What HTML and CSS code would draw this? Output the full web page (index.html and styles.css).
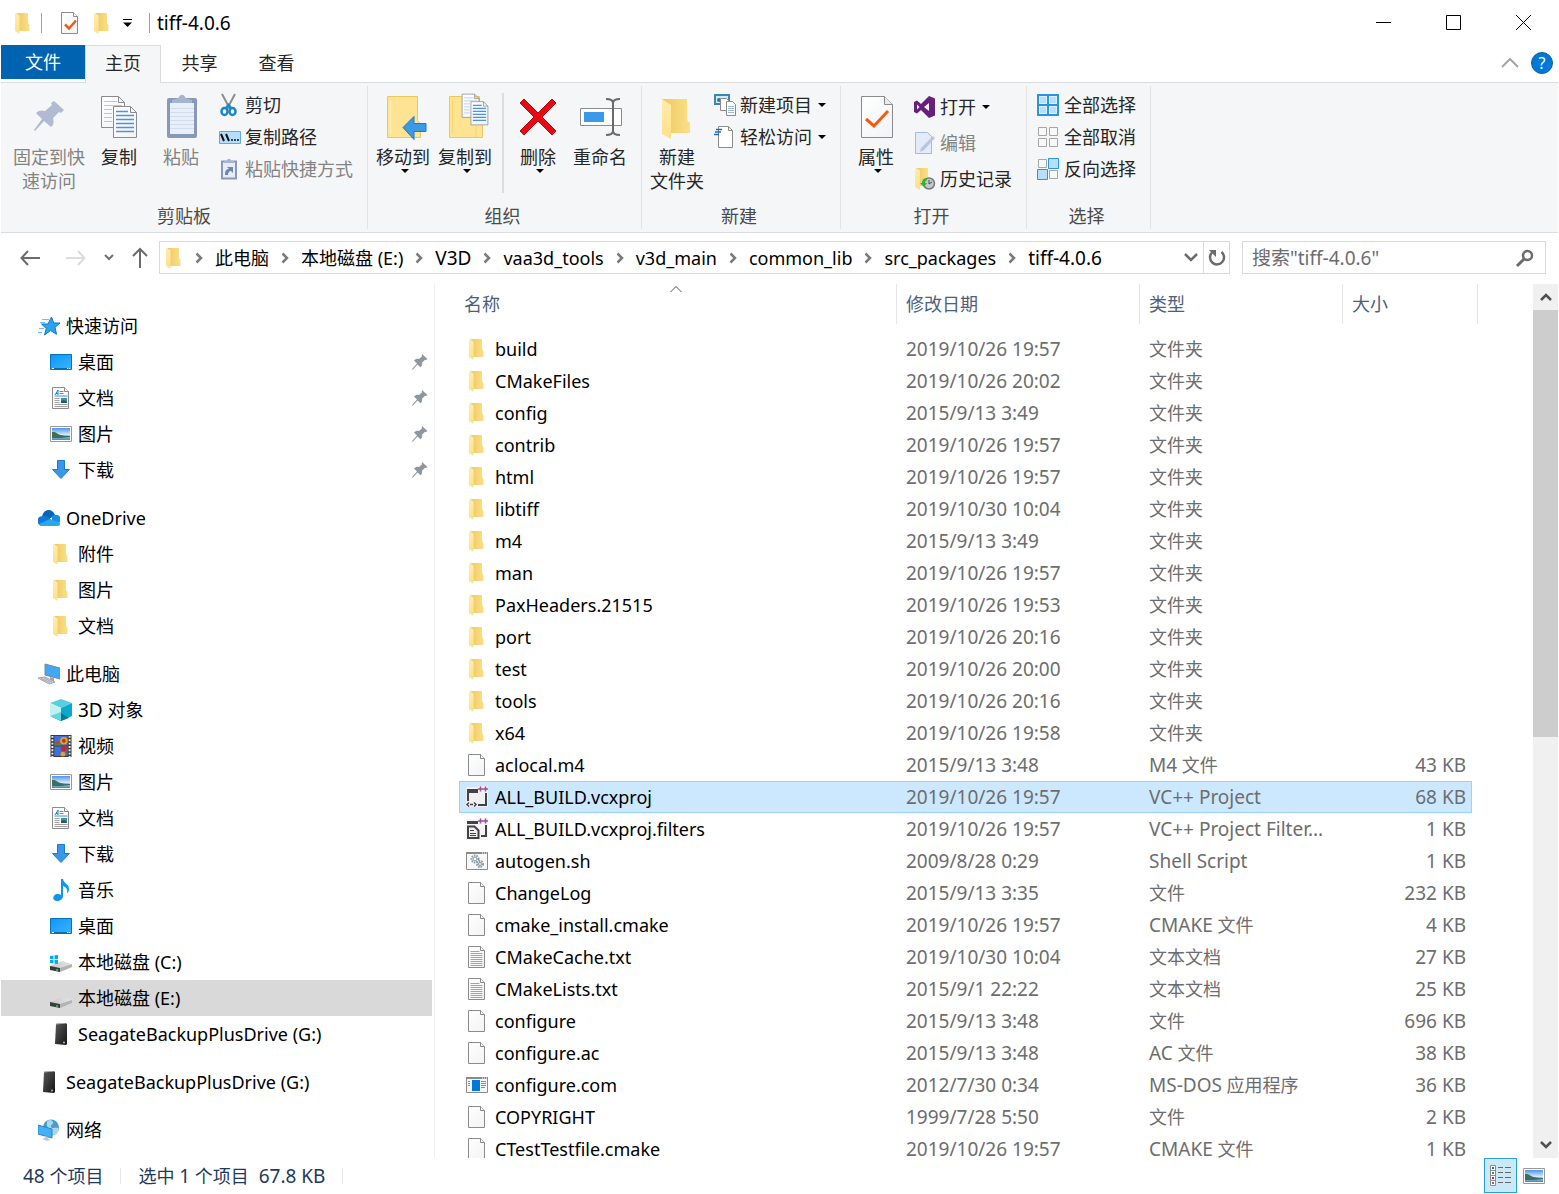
FILE: index.html
```html
<!DOCTYPE html>
<html lang="zh-CN">
<head>
<meta charset="utf-8">
<title>tiff-4.0.6</title>
<link rel="stylesheet" href="styles.css">
</head>
<body>
<svg class="sprite" aria-hidden="true">
  <defs>
    <linearGradient id="g-folder" x1="0" x2="1"><stop offset="0" stop-color="#edc863"/><stop offset="1" stop-color="#fcdf87"/></linearGradient>
    <linearGradient id="g-flap" x1="0" x2="0" y1="0" y2="1"><stop offset="0" stop-color="#ffecac"/><stop offset="1" stop-color="#ffe08a"/></linearGradient>
    <linearGradient id="g-desk" x1="0" x2="1" y1="0" y2="1"><stop offset="0" stop-color="#0c97fb"/><stop offset="1" stop-color="#3db3ff"/></linearGradient>
    <linearGradient id="g-sky" x1="0" x2="0" y1="0" y2="1"><stop offset="0" stop-color="#4f93ee"/><stop offset=".55" stop-color="#d3ebfb"/><stop offset="1" stop-color="#3f86c4"/></linearGradient>
    <linearGradient id="g-page" x1="0" x2="1" y1="0" y2="1"><stop offset="0" stop-color="#fff"/><stop offset="1" stop-color="#f1f3f6"/></linearGradient>
    <linearGradient id="g-drive" x1="0" x2="1"><stop offset="0" stop-color="#c9c9cb"/><stop offset="1" stop-color="#e4e4e6"/></linearGradient>
    <linearGradient id="g-dark" x1="0" x2="1" y1="0" y2="1"><stop offset="0" stop-color="#5a5a5a"/><stop offset="1" stop-color="#151515"/></linearGradient>
  </defs>
  <symbol id="folder" viewBox="0 0 22 22"><path d="M4 1h12v10l1.500 2v6H7V4z" fill="url(#g-folder)"/><path d="M3 1l4.500 2.500V22L3 19z" fill="url(#g-flap)"/></symbol>
  <symbol id="file" viewBox="0 0 22 22"><path d="M2.500.5h12l4 4v17h-16z" fill="url(#g-page)" stroke="#8b8b8b"/><path d="M14.500.5v4h4" fill="#fff" stroke="#8b8b8b"/></symbol>
  <symbol id="text" viewBox="0 0 22 22"><use href="#file"/><path d="M4.500 5.500h9M4.500 7.500h12M4.500 9.500h12M4.500 11.500h12M4.500 13.500h12M4.500 15.500h12M4.500 17.500h12M4.500 19.500h12" stroke="#a3a3a3"/></symbol>
  <symbol id="vcx" viewBox="0 0 22 22"><path d="M0 1h12V0h10v21H0z" fill="#f0eff1"/><path d="M1 3h11v4H3v8H1zM19 7h2v13h-9v-2h7z" fill="#424242"/><path d="M12 3h5M14.500.5v5M17 3h5M19.500.5v5" stroke="#9b4f96" stroke-width="1.500"/><path d="M3 16.500l-2 2 2 2M8 16.500l2 2-2 2M4 18.500h3" stroke="#424242" stroke-width="1.500" fill="none"/></symbol>
  <symbol id="filters" viewBox="0 0 22 22"><path d="M0 1h12V0h10v22H0z" fill="#f4f3f5"/><path d="M1 3h11v3H1zM19 7h2v12h-6v-2h4z" fill="#424242"/><path d="M12 3h5M14.500.5v5M17 3h5M19.500.5v5" stroke="#9b4f96" stroke-width="1.500"/><path d="M2 8.500h6.500l4 4V20H2z" fill="#f0eff1" stroke="#424242" stroke-width="2"/><path d="M4 12.500h4M4 15.500h6M4 17.500h6" stroke="#424242"/></symbol>
  <symbol id="script" viewBox="0 0 22 22"><path d="M.5 2.500h21v17H.5z" fill="#f8f8f8" stroke="#8b8b8b"/><path d="M0 3h22" stroke="#8b8b8b" stroke-width="2"/><path d="M16 3h5" stroke="#fff" stroke-dasharray="1 1"/><g fill="none" stroke="#8998a5"><circle cx="9" cy="9" r="3.500" stroke-width="2" stroke-dasharray="1.500 1"/><circle cx="9" cy="9" r="2"/><circle cx="14" cy="14" r="3" stroke-width="2" stroke-dasharray="1.500 1"/><circle cx="14" cy="14" r="1.500"/></g></symbol>
  <symbol id="app" viewBox="0 0 22 22"><path d="M.5 3.500h21v15H.5z" fill="#f5f5f5" stroke="#8b8b8b"/><path d="M0 4h22" stroke="#8b8b8b" stroke-width="2"/><path d="M16 4h5" stroke="#fff" stroke-dasharray="1 1"/><path d="M6 6h8v11H6z" fill="#0078d7"/><path d="M2 7.500h2M2 9.500h2M2 11.500h2M15 7.500h5M15 9.500h5M15 11.500h5M15 13.500h4" stroke="#8b8b8b"/></symbol>
  <symbol id="desktop" viewBox="0 0 22 22"><path d="M.5 3.500h21v15H.5z" fill="url(#g-desk)" stroke="#0773bf"/><path d="M2 17.500h2M17 17.500h1M19 17.500h1" stroke="#fff"/><path d="M4 17.500h13" stroke="#086cb5"/></symbol>
  <symbol id="document" viewBox="0 0 22 22"><use href="#file"/><path d="M5 8l3-5v5M6 6.500h2" stroke="#1e88cf" fill="none"/><path d="M9.500 4.500h4M9.500 6.500h4M4.500 9h13" stroke="#3a99d8"/><path d="M4.500 11.500h5M4.500 13.500h5M4.500 15.500h5M4.500 17.500h13M4.500 19.500h13" stroke="#a3a3a3"/><path d="M11 11h6v5h-6z" fill="#4a87b5"/><path d="M11 14l3-1 3 2v1h-6z" fill="#285d50"/></symbol>
  <symbol id="picture" viewBox="0 0 22 22"><path d="M.5 3.500h21v15H.5z" fill="#fff" stroke="#989898"/><path d="M2 5h18v12H2z" fill="url(#g-sky)"/><path d="M2 9c4-.5 5 2 9 3s6 .5 9 1v1c-6 1-12 1-18 1z" fill="#3f6f55"/></symbol>
  <symbol id="download" viewBox="0 0 22 22"><path d="M7.500 1.500h7v9h5L11 19.500 2.500 10.500h5z" fill="#3797e8" stroke="#1e79c8"/></symbol>
  <symbol id="music" viewBox="0 0 22 22"><path d="M11 0h2c1 5 6 5 6 10 0 2-1 4-2 4 1-4-1-6-4-7v10c0 3-3 5-6 5-5 0-5-6 0-7 2 0 3 0 4 1z" fill="#0d95f2"/></symbol>
  <symbol id="star" viewBox="0 0 22 22"><path d="M13.500 2l2.200 6H22l-5 4.300 1.500 7-6-3.800-6 4.500 1.800-6.500L3.500 9H10z" fill="#29a4f5" stroke="#1274bd"/><path d="M4 4.500h7M2 7.500h5M1 13.500h5M0 17.500h4" stroke="#69bff6"/></symbol>
  <symbol id="cloud" viewBox="0 0 22 22"><path d="M4 10C5 2 14 0 17 8l-7 5z" fill="#0864b8"/><path d="M5 19C-2 19-3 9 5 9c4-1 6 2 9 5z" fill="#0f78d4"/><path d="M14 9c5-3 10 0 9 6l-9 2z" fill="#1490df"/><path d="M1 17l11-5 11 4c0 2-2 3-4 3H5c-2 0-3-1-4-2z" fill="#28a8ea"/></symbol>
  <symbol id="pc" viewBox="0 0 22 22"><path d="M7 1l15 4v11L7 12z" fill="#3fa9f5" stroke="#7c8790"/><path d="M12 14l4 1v3l-4-1z" fill="#9ea4aa"/><path d="M0 15l7-1 10 5-6 2z" fill="#d9dde1" stroke="#9da5ad"/><path d="M3 15.500l9 4M6 15l8 4" stroke="#9da5ad"/></symbol>
  <symbol id="cube" viewBox="0 0 22 22"><path d="M0 4l11-4 11 4-11 5z" fill="#58cfe0"/><path d="M0 4l11 5v13L0 17z" fill="#c5eff0"/><path d="M22 4L11 9v13l11-5z" fill="#0aa9cb"/><path d="M11 14l8 5-8 3-9-4z" fill="#087b93"/><path d="M0 17l11-4v9z" fill="#63d6df"/></symbol>
  <symbol id="video" viewBox="0 0 22 23"><path d="M0 0h22v23H0z" fill="#3a3a3a"/><path d="M2 1v22M20 1v22" stroke="#eee" stroke-width="2" stroke-dasharray="2 1.500"/><path d="M4 1h14v10H4zM4 12h14v10H4z" fill="#3e6fe0"/><circle cx="14" cy="6" r="4" fill="#e5a519"/><circle cx="14" cy="6" r="2" fill="#bb3824"/><circle cx="14" cy="14" r="3" fill="#c2272d"/><path d="M4 10c3-4 5-4 7 1H4z" fill="#38962c"/><circle cx="7" cy="8" r="2" fill="#d5392b"/><circle cx="13" cy="20" r="2.500" fill="#e5a519"/></symbol>
  <symbol id="drive" viewBox="0 0 22 22"><path d="M0 15l12-5 10 3v3l-12 5-10-3z" fill="url(#g-drive)"/><path d="M0 15l10 2v4L0 19z" fill="#3b3d3b"/><path d="M10 17l12-4v3l-12 5z" fill="#b3b3b5"/><path d="M7 18v2" stroke="#3ed04b" stroke-width="1.500"/></symbol>
  <symbol id="windrive" viewBox="0 0 22 22"><use href="#drive"/><path d="M0 5l3.500-.5V8H0zM4.500 4.300L8 4v4H4.500zM0 9h3.500v3.500L0 12zM4.500 9H8v4l-3.500-.3z" fill="#00adef"/></symbol>
  <symbol id="seagate" viewBox="0 0 22 22"><path d="M6 1l10-1 1 1v20l-1 1-11-1z" fill="url(#g-dark)"/><path d="M6 1l10-1 1 1" stroke="#aaa" fill="none"/><circle cx="14" cy="19.500" r="1" fill="#b8b8b8"/></symbol>
  <symbol id="network" viewBox="0 0 22 22"><circle cx="13" cy="8.500" r="8" fill="#4a9dc9"/><path d="M9 2c3-2 5-1 6 1s-3 3-2 5 5 0 7 1-1 7-4 7-8-6-7-14z" fill="#a9d8ea"/><path d="M0 6l14 4v9L0 15z" fill="#43b0f7" stroke="#2c84bd"/><path d="M7 17l3 1v2l3 1-4 1-5-2 3-1z" fill="#c3c8cc"/></symbol>
  <symbol id="pushpin" viewBox="0 0 16 16"><path d="M10 0l5.500 5-1.500 1-1-.2-3 3c.5 2 0 3-1.500 4.500L5.500 10.500 1 15.500l-1 .5.5-1.500L5 9.500 2 6.500C3.500 5 5 4.500 7 5l2.800-2.500z"/></symbol>
  <symbol id="proplist" viewBox="0 0 22 22"><use href="#file"/><path d="M6 12.500l4 4 7-8" stroke="#f4590c" stroke-width="2.500" fill="none"/></symbol>
  <symbol id="chev" viewBox="0 0 8 12"><path d="M1.500 1.500L6 6l-4.500 4.500" fill="none" stroke="#7a7a7a" stroke-width="2.500"/></symbol>
  <symbol id="caret" viewBox="0 0 8 4"><path d="M0 0h8L4 4z"/></symbol>
  <symbol id="copypages" viewBox="0 0 38 44"><g fill="url(#g-page)" stroke="#8b8b8b"><path d="M1.500 1.500h17l6 6v25h-23zM18.500 1.500v6h6"/><path d="M13.500 11.500h17l6 6v25h-23zM30.500 11.500v6h6"/></g><path d="M4 6.500h13M4 10.500h18M4 14.500h8M4 18.500h8M4 22.500h8M4 26.500h8" stroke="#a9c8f5"/><path d="M16 16.500h12M16 20.500h18M16 24.500h18M16 28.500h18M16 32.500h18M16 36.500h18" stroke="#4e90f0" stroke-width="1.500"/></symbol>
</svg>

<header class="titlebar">
  <svg class="ico"><use href="#folder"/></svg>
  <span class="bar"></span>
  <button class="ico-btn" aria-label="属性"><svg class="ico"><use href="#proplist"/></svg></button>
  <button class="ico-btn" aria-label="新建文件夹"><svg class="ico"><use href="#folder"/></svg></button>
  <button class="ico-btn" aria-label="自定义快速访问工具栏"><svg class="qat" viewBox="0 0 10 8"><path d="M0 .5h9" stroke="#000"/><path d="M0 3.500h9L4.500 8z"/></svg></button>
  <span class="bar"></span>
  <h1 class="title latin">tiff-4.0.6</h1>
  <div class="caption">
    <button aria-label="最小化"><svg width="15" height="15" viewBox="0 0 15 15"><path d="M0 7.500h15" stroke="#000"/></svg></button>
    <button aria-label="最大化"><svg width="15" height="15" viewBox="0 0 15 15"><path d="M.5.5h14v14H.5z" stroke="#000" fill="none"/></svg></button>
    <button aria-label="关闭"><svg width="15" height="15" viewBox="0 0 15 15"><path d="M0 0l15 15M15 0L0 15" stroke="#000"/></svg></button>
  </div>
</header>

<nav class="tabs">
  <button class="tab tab-file">文件</button>
  <button class="tab tab-on">主页</button>
  <button class="tab">共享</button>
  <button class="tab">查看</button>
  <div class="tabs-end">
    <button class="ico-btn" aria-label="最小化功能区"><svg width="18" height="10" viewBox="0 0 18 10"><path d="M1 9l8-8 8 8" fill="none" stroke="#a5a5a5" stroke-width="2"/></svg></button>
    <button class="help" aria-label="帮助">?</button>
  </div>
</nav>

<section class="ribbon">
  <div class="group">
    <div class="tools">
      <button class="big w-pin off"><svg width="32" height="48" viewBox="0 0 32 48"><path d="M21 8l10 9-3 3-2-1-6 6c1 4 1 6-2 9l-7-6-9 10-1-1 8-11-6-6c3-3 6-3 9-2l7-6-1-2z" fill="#aebbd0"/></svg>固定到快<br>速访问</button>
      <button class="big w-56"><svg width="38" height="48" viewBox="0 -2 38 48"><use href="#copypages" width="38" height="44"/></svg>复制</button>
      <button class="big w-68 off"><svg width="30" height="48" viewBox="0 0 30 48"><rect x="1" y="5" width="30" height="40" rx="2" fill="#8798bb"/><path d="M4 10h24v31H4z" fill="#e9eff9"/><path d="M4 15.500h24M4 19.500h24M4 23.500h24M4 27.500h24M4 31.500h24M4 35.500h24" stroke="#d3dcea"/><path d="M6 10V7c2-1 6-1 7-3 1-3 5-3 6 0 1 2 5 2 7 3v3z" fill="#a5b4cf"/></svg>粘贴</button>
      <div class="stack">
        <button class="small"><svg class="ico" viewBox="1 0 22 22"><path d="M4 0l8 15M17 0L9 15" stroke="#8d8d8d" stroke-width="2"/><g fill="none" stroke="#1b87c9" stroke-width="2.500"><ellipse cx="6.500" cy="17.500" rx="3" ry="3.500"/><ellipse cx="14.500" cy="17.500" rx="3" ry="3.500"/><path d="M8 14l2.500-3 2.500 3"/></g></svg>剪切</button>
        <button class="small"><svg class="ico" viewBox="0 0 22 22"><path d="M.5 5.500h21v12H.5z" fill="#b4dffc" stroke="#63a9d8"/><path d="M2 8l3 7M7 8l3 7" stroke="#111" stroke-width="2"/><path d="M12 14h2M15 14h2M18 14h2" stroke="#111" stroke-width="1.500"/></svg>复制路径</button>
        <button class="small off"><svg class="ico" viewBox="1 0 22 22"><path d="M4 3.500h14v17H4z" fill="#e6edf8" stroke="#8798bb" stroke-width="2"/><path d="M6 5V3h3c0-3 4-3 4 0h3v2z" fill="#a5b4cf"/><path d="M7 17c0-4 1-6 4-6l-2-2h6v6l-2-2c-2 0-3 2-3 4z" fill="#6f86ae"/></svg>粘贴快捷方式</button>
      </div>
    </div>
    <div class="group-name">剪贴板</div>
  </div>

  <div class="group g-org">
    <div class="tools">
      <button class="big w-62"><svg width="34" height="48" viewBox="0 0 34 48"><path d="M1.500 3.500h30v24l3 3v14h-33z" fill="#fee392" stroke="#edc75c"/><path d="M4.500 7v34" stroke="#fff0b8"/><path d="M17 34.500l11-11v7h12v8H28v8z" fill="#3a9ae8" stroke="#1e79c8"/></svg>移动到<svg class="caret"><use href="#caret"/></svg></button>
      <button class="big w-62"><svg width="34" height="48" viewBox="0 0 34 48"><path d="M1.500 3.500h30v24l3 3v14h-33z" fill="#fee392" stroke="#edc75c"/><path d="M4.500 7v34M28 32v12" stroke="#f8d46d"/><svg x="13" y="0" width="28" height="33" viewBox="0 0 38 44" preserveAspectRatio="none"><use href="#copypages" width="38" height="44"/></svg></svg>复制到<svg class="caret"><use href="#caret"/></svg></button>
      <span class="split"></span>
      <button class="big w-68"><svg width="38" height="48" viewBox="0 -1 38 48"><path d="M1 9l4-4 14 14L33 5l4 4-14 14 14 14-4 4-14-14L5 41l-4-4 14-14z" fill="#e80a12" stroke="#b60a10"/></svg>删除<svg class="caret"><use href="#caret"/></svg></button>
      <button class="big w-56"><svg width="42" height="48" viewBox="0 0 42 48"><path d="M1.500 15.500h41v17h-41z" fill="#fff" stroke="#8b8b8b"/><path d="M5 19h20v10H5z" fill="#3a9ae8"/><path d="M27 6c5 0 7 1 7 4v28c0 3-2 4-7 4M41 6c-5 0-7 1-7 4M41 42c-5 0-7-1-7-4" fill="none" stroke="#6a6a6a" stroke-width="2"/></svg>重命名</button>
    </div>
    <div class="group-name">组织</div>
  </div>

  <div class="group g-flush">
    <div class="tools">
      <button class="big w-70"><svg width="32" height="48" viewBox="1 -1 32 48"><path d="M2 5h25v21l3 3v10H8V12z" fill="url(#g-folder)"/><path d="M2 5l9 6v34l-9-5z" fill="url(#g-flap)"/></svg>新建<br>文件夹</button>
      <div class="stack s-new">
        <button class="small"><svg class="ico" viewBox="0 0 22 22"><path d="M1 1h14v9H1z" fill="#cbeafb" stroke="#3c86ad" stroke-width="2"/><circle cx="5" cy="6" r="2" fill="#3f7a66"/><path d="M6.500 4.500h6l2 2v10h-8z" fill="#fff" stroke="#8b8b8b"/><path d="M12.500 7.500h6l3 3v11h-9z" fill="#fff" stroke="#8b8b8b"/><path d="M14 12.500h6M14 14.500h6M14 16.500h6M14 18.500h6" stroke="#9cb6dd"/></svg>新建项目<svg class="caret"><use href="#caret"/></svg></button>
        <button class="small"><svg class="ico" viewBox="0 0 22 22"><path d="M4.500.5h10l4 4v17h-14z" fill="#fff" stroke="#8b8b8b"/><path d="M14.500.5v4h4" fill="none" stroke="#8b8b8b"/><path d="M2 3.500h6M1 6h6M0 8.500h5" stroke="#1d6fb5" stroke-width="1.500"/></svg>轻松访问<svg class="caret"><use href="#caret"/></svg></button>
      </div>
    </div>
    <div class="group-name">新建</div>
  </div>

  <div class="group g-flush">
    <div class="tools">
      <button class="big w-70"><svg width="32" height="48" viewBox="0 0 32 48"><path d="M1.500 3.500h23l8 8v33h-31z" fill="url(#g-page)" stroke="#8b8b8b"/><path d="M24.500 3.500v8h8" fill="#e8eaec" stroke="#8b8b8b"/><path d="M6 26l8 7 14-15" fill="none" stroke="#f4590c" stroke-width="3"/></svg>属性<svg class="caret"><use href="#caret"/></svg></button>
      <div class="stack s-open">
        <button class="small"><svg class="ico" viewBox="0 0 22 22"><path fill-rule="evenodd" d="M15 0l6 2.500v17L15 22 7 14l-4 3.500L0 16V6l3-1.500L7 8zM3 8.500v5L5.500 11zM15 7l-5 4 5 4z" fill="#68217a"/></svg>打开<svg class="caret"><use href="#caret"/></svg></button>
        <button class="small off"><svg class="ico" viewBox="0 0 22 22"><path d="M1.500.5h12l4 4v17h-16z" fill="#e3ebf8" stroke="#a9bad6"/><path d="M6 20l1-4L19 4l2 2L10 18z" fill="#b7c6de"/></svg>编辑</button>
        <button class="small"><svg class="ico" viewBox="0 0 22 22"><path d="M2 0h12v18H6V3z" fill="url(#g-folder)"/><path d="M1 0l5 3v19l-5-3z" fill="url(#g-flap)"/><circle cx="15" cy="15.500" r="5.500" fill="#c4c8ca" stroke="#747b80" stroke-width="1.500"/><path d="M15 12v4l3-2" stroke="#4b4f52" fill="none"/><path d="M13 10c-4 0-5 3-5 5H6l4 4 3-4h-2c0-2 1-2 2-3z" fill="#35b135"/></svg>历史记录</button>
      </div>
    </div>
    <div class="group-name">打开</div>
  </div>

  <div class="group g-select">
    <div class="tools">
      <div class="stack">
        <button class="small"><svg class="ico" viewBox="0 0 22 22"><path d="M1 1h20v20H1zM11 1v20M1 11h20" fill="#b5dffc" stroke="#2b94e2" stroke-width="2"/><path d="M2.500 2.500h7v7h-7zM12.500 2.500h7v7h-7zM2.500 12.500h7v7h-7zM12.500 12.500h7v7h-7z" fill="none" stroke="#dff1fe"/></svg>全部选择</button>
        <button class="small"><svg class="ico" viewBox="0 0 22 22"><path d="M1.500 1.500h8v8h-8zM12.500 1.500h8v8h-8zM1.500 12.500h8v8h-8zM12.500 12.500h8v8h-8z" fill="#f8f8f8" stroke="#a6a6a6"/></svg>全部取消</button>
        <button class="small"><svg class="ico" viewBox="0 0 22 22"><path d="M1.500 1.500h8v8h-8zM12.500 12.500h8v8h-8z" fill="#f8f8f8" stroke="#a6a6a6"/><path d="M11.500.5h10v10h-10zM.5 11.500h10v10H.5z" fill="#b5dffc" stroke="#2b94e2"/></svg>反向选择</button>
      </div>
    </div>
    <div class="group-name">选择</div>
  </div>
</section>

<div class="navbar">
  <button class="nav w-46" aria-label="后退"><svg width="20" height="16" viewBox="0 0 20 16"><path d="M8 1L1.500 8 8 15M2 8h18" fill="none" stroke="#6b6b6b" stroke-width="2"/></svg></button>
  <button class="nav w-45" aria-label="前进"><svg width="20" height="16" viewBox="0 0 20 16"><path d="M12 1l6.500 7L12 15M18 8H0" fill="none" stroke="#dcdcdc" stroke-width="2"/></svg></button>
  <button class="nav w-22" aria-label="最近浏览的位置"><svg width="10" height="7" viewBox="0 0 10 7"><path d="M1 1l4 4 4-4" fill="none" stroke="#707070" stroke-width="2"/></svg></button>
  <button class="nav w-39" aria-label="上移"><svg width="16" height="20" viewBox="0 0 16 20"><path d="M1 8l7-7 7 7M8 1.500V20" fill="none" stroke="#6b6b6b" stroke-width="2"/></svg></button>
  <div class="address">
    <svg class="ico"><use href="#folder"/></svg>
    <ol class="crumbs">
      <li><svg class="chev"><use href="#chev"/></svg><a href="#">此电脑</a></li>
      <li><svg class="chev"><use href="#chev"/></svg><a href="#">本地磁盘 (E:)</a></li>
      <li><svg class="chev"><use href="#chev"/></svg><a class="latin" href="#">V3D</a></li>
      <li><svg class="chev"><use href="#chev"/></svg><a href="#">vaa3d_tools</a></li>
      <li><svg class="chev"><use href="#chev"/></svg><a href="#">v3d_main</a></li>
      <li><svg class="chev"><use href="#chev"/></svg><a href="#">common_lib</a></li>
      <li><svg class="chev"><use href="#chev"/></svg><a href="#">src_packages</a></li>
      <li><svg class="chev"><use href="#chev"/></svg><a class="latin" href="#">tiff-4.0.6</a></li>
    </ol>
    <button class="addr-btn" aria-label="以前的位置"><svg width="14" height="9" viewBox="0 0 14 9"><path d="M1 1l6 6 6-6" fill="none" stroke="#6b6b6b" stroke-width="2.500"/></svg></button>
    <button class="addr-btn refresh" aria-label="刷新"><svg width="18" height="18" viewBox="0 0 18 18"><path d="M4 3.500a7 7 0 1 0 9.500-.5" fill="none" stroke="#6b6b6b" stroke-width="2.500"/><path d="M1 1h7v7z" fill="#6b6b6b"/></svg></button>
  </div>
  <div class="search">
    <input type="search" aria-label="搜索" placeholder='搜索"tiff-4.0.6"'>
    <button class="ico-btn" aria-label="搜索"><svg width="18" height="18" viewBox="0 0 18 18"><circle cx="11.500" cy="6.500" r="4.500" fill="none" stroke="#6b6b6b" stroke-width="2.500"/><path d="M8 10l-7 7" stroke="#6b6b6b" stroke-width="3"/></svg></button>
  </div>
</div>

<main class="main">
  <nav class="tree">
    <ul>
      <li><a class="lvl1" href="#"><svg class="ico"><use href="#star"/></svg>快速访问</a></li>
      <li><a href="#"><svg class="ico"><use href="#desktop"/></svg>桌面<svg class="pin"><use href="#pushpin"/></svg></a></li>
      <li><a href="#"><svg class="ico"><use href="#document"/></svg>文档<svg class="pin"><use href="#pushpin"/></svg></a></li>
      <li><a href="#"><svg class="ico"><use href="#picture"/></svg>图片<svg class="pin"><use href="#pushpin"/></svg></a></li>
      <li><a href="#"><svg class="ico"><use href="#download"/></svg>下载<svg class="pin"><use href="#pushpin"/></svg></a></li>
    </ul>
    <ul>
      <li><a class="lvl1" href="#"><svg class="ico"><use href="#cloud"/></svg>OneDrive</a></li>
      <li><a href="#"><svg class="ico"><use href="#folder"/></svg>附件</a></li>
      <li><a href="#"><svg class="ico"><use href="#folder"/></svg>图片</a></li>
      <li><a href="#"><svg class="ico"><use href="#folder"/></svg>文档</a></li>
    </ul>
    <ul>
      <li><a class="lvl1" href="#"><svg class="ico"><use href="#pc"/></svg>此电脑</a></li>
      <li><a href="#"><svg class="ico"><use href="#cube"/></svg><span><span class="latin">3D</span> 对象</span></a></li>
      <li><a href="#"><svg class="ico"><use href="#video"/></svg>视频</a></li>
      <li><a href="#"><svg class="ico"><use href="#picture"/></svg>图片</a></li>
      <li><a href="#"><svg class="ico"><use href="#document"/></svg>文档</a></li>
      <li><a href="#"><svg class="ico"><use href="#download"/></svg>下载</a></li>
      <li><a href="#"><svg class="ico"><use href="#music"/></svg>音乐</a></li>
      <li><a href="#"><svg class="ico"><use href="#desktop"/></svg>桌面</a></li>
      <li><a href="#"><svg class="ico"><use href="#windrive"/></svg>本地磁盘 (C:)</a></li>
      <li><a class="current" href="#"><svg class="ico"><use href="#drive"/></svg>本地磁盘 (E:)</a></li>
      <li><a href="#"><svg class="ico"><use href="#seagate"/></svg>SeagateBackupPlusDrive (G:)</a></li>
    </ul>
    <ul>
      <li><a class="lvl1" href="#"><svg class="ico"><use href="#seagate"/></svg>SeagateBackupPlusDrive (G:)</a></li>
    </ul>
    <ul>
      <li><a class="lvl1" href="#"><svg class="ico"><use href="#network"/></svg>网络</a></li>
    </ul>
  </nav>

  <div class="list">
    <table class="files">
      <colgroup><col><col class="c-date"><col class="c-type"><col class="c-size"><col class="c-end"></colgroup>
      <thead>
        <tr>
          <th><button>名称<svg class="sort" viewBox="0 0 12 6"><path d="M.5 6L6 .5 11.500 6" fill="none" stroke="#555"/></svg></button></th>
          <th><button>修改日期</button></th>
          <th><button>类型</button></th>
          <th colspan="2"><button>大小</button></th>
        </tr>
      </thead>
      <tbody>
        <tr><td><svg class="ico"><use href="#folder"/></svg>build</td><td>2019/10/26 19:57</td><td>文件夹</td><td></td></tr>
        <tr><td><svg class="ico"><use href="#folder"/></svg>CMakeFiles</td><td>2019/10/26 20:02</td><td>文件夹</td><td></td></tr>
        <tr><td><svg class="ico"><use href="#folder"/></svg>config</td><td>2015/9/13 3:49</td><td>文件夹</td><td></td></tr>
        <tr><td><svg class="ico"><use href="#folder"/></svg>contrib</td><td>2019/10/26 19:57</td><td>文件夹</td><td></td></tr>
        <tr><td><svg class="ico"><use href="#folder"/></svg>html</td><td>2019/10/26 19:57</td><td>文件夹</td><td></td></tr>
        <tr><td><svg class="ico"><use href="#folder"/></svg>libtiff</td><td>2019/10/30 10:04</td><td>文件夹</td><td></td></tr>
        <tr><td><svg class="ico"><use href="#folder"/></svg>m4</td><td>2015/9/13 3:49</td><td>文件夹</td><td></td></tr>
        <tr><td><svg class="ico"><use href="#folder"/></svg>man</td><td>2019/10/26 19:57</td><td>文件夹</td><td></td></tr>
        <tr><td><svg class="ico"><use href="#folder"/></svg>PaxHeaders.21515</td><td>2019/10/26 19:53</td><td>文件夹</td><td></td></tr>
        <tr><td><svg class="ico"><use href="#folder"/></svg>port</td><td>2019/10/26 20:16</td><td>文件夹</td><td></td></tr>
        <tr><td><svg class="ico"><use href="#folder"/></svg>test</td><td>2019/10/26 20:00</td><td>文件夹</td><td></td></tr>
        <tr><td><svg class="ico"><use href="#folder"/></svg>tools</td><td>2019/10/26 20:16</td><td>文件夹</td><td></td></tr>
        <tr><td><svg class="ico"><use href="#folder"/></svg>x64</td><td>2019/10/26 19:58</td><td>文件夹</td><td></td></tr>
        <tr><td><svg class="ico"><use href="#file"/></svg>aclocal.m4</td><td>2015/9/13 3:48</td><td><span class="latin">M4</span> 文件</td><td>43 KB</td></tr>
        <tr class="selected"><td><svg class="ico"><use href="#vcx"/></svg>ALL_BUILD.vcxproj</td><td>2019/10/26 19:57</td><td><span class="latin">VC++ Project</span></td><td>68 KB</td></tr>
        <tr><td><svg class="ico"><use href="#filters"/></svg>ALL_BUILD.vcxproj.filters</td><td>2019/10/26 19:57</td><td><span class="latin">VC++ Project Filter...</span></td><td>1 KB</td></tr>
        <tr><td><svg class="ico"><use href="#script"/></svg>autogen.sh</td><td>2009/8/28 0:29</td><td><span class="latin">Shell Script</span></td><td>1 KB</td></tr>
        <tr><td><svg class="ico"><use href="#file"/></svg>ChangeLog</td><td>2015/9/13 3:35</td><td>文件</td><td>232 KB</td></tr>
        <tr><td><svg class="ico"><use href="#file"/></svg>cmake_install.cmake</td><td>2019/10/26 19:57</td><td><span class="latin">CMAKE</span> 文件</td><td>4 KB</td></tr>
        <tr><td><svg class="ico"><use href="#text"/></svg>CMakeCache.txt</td><td>2019/10/30 10:04</td><td>文本文档</td><td>27 KB</td></tr>
        <tr><td><svg class="ico"><use href="#text"/></svg>CMakeLists.txt</td><td>2015/9/1 22:22</td><td>文本文档</td><td>25 KB</td></tr>
        <tr><td><svg class="ico"><use href="#file"/></svg>configure</td><td>2015/9/13 3:48</td><td>文件</td><td>696 KB</td></tr>
        <tr><td><svg class="ico"><use href="#file"/></svg>configure.ac</td><td>2015/9/13 3:48</td><td><span class="latin">AC</span> 文件</td><td>38 KB</td></tr>
        <tr><td><svg class="ico"><use href="#app"/></svg>configure.com</td><td>2012/7/30 0:34</td><td><span class="latin">MS-DOS</span> 应用程序</td><td>36 KB</td></tr>
        <tr><td><svg class="ico"><use href="#file"/></svg>COPYRIGHT</td><td>1999/7/28 5:50</td><td>文件</td><td>2 KB</td></tr>
        <tr><td><svg class="ico"><use href="#file"/></svg>CTestTestfile.cmake</td><td>2019/10/26 19:57</td><td><span class="latin">CMAKE</span> 文件</td><td>1 KB</td></tr>
      </tbody>
    </table>
  </div>

  <div class="scroll">
    <button aria-label="向上滚动"><svg width="12" height="8" viewBox="0 0 12 8"><path d="M1 7l5-5 5 5" fill="none" stroke="#505050" stroke-width="2.500"/></svg></button>
    <div class="track"><div class="thumb"></div></div>
    <button aria-label="向下滚动"><svg width="12" height="8" viewBox="0 0 12 8"><path d="M1 1l5 5 5-5" fill="none" stroke="#505050" stroke-width="2.500"/></svg></button>
  </div>
</main>

<footer class="status">
  <span><span class="latin">48</span> 个项目</span>
  <span class="sbar"></span>
  <span>选中 <span class="latin">1</span> 个项目</span>
  <span class="size latin">67.8 KB</span>
  <span class="sbar"></span>
  <div class="views">
    <button class="view on" aria-label="详细信息"><svg width="21" height="21" viewBox="0 0 21 21"><path d="M.5.5h5v20h-5zM.5 5.500h5M.5 10.500h5M.5 15.500h5" fill="#fff" stroke="#8b8b8b"/><path d="M2 3h2" stroke="#2b6cb0" stroke-width="2"/><path d="M2 8h2M2 18h2" stroke="#4d8a4d" stroke-width="2"/><path d="M2 13h2" stroke="#c22" stroke-width="2"/><path d="M8 2.500h5M15 2.500h6M8 7.500h5M15 7.500h6M8 12.500h5M15 12.500h6M8 17.500h5M15 17.500h6" stroke="#666"/></svg></button>
    <button class="view" aria-label="大缩略图"><svg class="ico"><use href="#picture"/></svg></button>
  </div>
</footer>
</body>
</html>
```

FILE: styles.css
```css
* { box-sizing: border-box; }

body {
  margin: 0;
  padding: 0 1px;
  height: 100vh;
  display: flex;
  flex-direction: column;
  overflow: hidden;
  background: #fff;
  color: #000;
  font: 18px/24px "Noto Sans", "Noto Sans CJK SC", sans-serif;
}

button {
  font: inherit;
  color: inherit;
  background: none;
  border: 0;
  padding: 0;
}

a { color: inherit; text-decoration: none; }
ul, ol { list-style: none; margin: 0; padding: 0; }
svg { display: block; flex: none; overflow: visible; }

.sprite { position: absolute; width: 0; height: 0; }
.latin { font-size: 19px; }
.ico { width: 22px; height: 22px; }
.ico-btn { display: flex; align-items: center; }
.caret { width: 8px; height: 4px; }

/* Title bar */
.titlebar {
  display: flex;
  align-items: center;
  height: 45px;
  padding-left: 11px;
  flex: none;
}
.titlebar .bar { width: 1px; height: 20px; background: #a0a0a0; margin: 0 17px 0 7px; }
.titlebar .ico-btn { margin-right: 10px; }
.titlebar .ico-btn + .bar { margin: 0 7px 0 6px; }
.qat { width: 10px; height: 8px; }
.title { margin: 0; font-weight: 400; }
.caption { display: flex; align-self: stretch; margin-left: auto; }
.caption button { width: 70px; display: flex; align-items: center; justify-content: center; }

/* Ribbon tabs */
.tabs {
  display: flex;
  height: 38px;
  flex: none;
  border-bottom: 1px solid #dadbdc;
}
.tab { width: 77px; height: 36px; color: #262626; }
.tab-file { width: 84px; height: 34px; background: #0063b1; color: #fff; }
.tab-on {
  width: 76px;
  height: 38px;
  padding-bottom: 3px;
  border: 1px solid #dadbdc;
  border-bottom: 0;
  background: #f5f6f7;
}
.tabs-end { display: flex; align-items: center; gap: 12px; height: 36px; margin-left: auto; padding-right: 5px; }
.help {
  width: 22px;
  height: 22px;
  border: 1px solid #0a5ea8;
  border-radius: 50%;
  background: #0078d7;
  color: #fff;
  font-size: 16px;
  line-height: 20px;
}

/* Ribbon */
.ribbon {
  display: flex;
  flex: none;
  padding: 3px 0;
  background: #f5f6f7;
  border-bottom: 1px solid #dadbdc;
  color: #262626;
}
.group {
  display: flex;
  flex-direction: column;
  padding: 3px 0 1px;
  border-right: 1px solid #e2e3e4;
}
.tools { display: flex; height: 115px; padding: 0 14px 0 6px; }
.g-org .tools { padding-left: 4px; padding-right: 13px; }
.g-flush .tools { padding-left: 0; }
.g-select .tools { padding-left: 10px; }
.group-name { padding-right: 4px; text-align: center; color: #4a4a4a; }
.group:first-child .group-name { padding-right: 0; }
.big {
  display: flex;
  flex-direction: column;
  align-items: center;
  padding-top: 4px;
  white-space: nowrap;
}
.big > svg:first-child { margin-bottom: 4px; }
.big .caret { margin-left: 4px; }
.w-pin { width: 84px; }
.w-56 { width: 56px; }
.w-62 { width: 62px; }
.w-68 { width: 68px; }
.w-70 { width: 70px; }
.off { color: #838383; }
.split { width: 2px; height: 100px; margin: 4px 0 0 6px; background: #dcdddf; }
.stack { display: flex; flex-direction: column; padding-left: 4px; }
.g-select .stack { padding-left: 0; }
.s-new { padding-left: 2px; }
.s-open { padding-left: 3px; }
.small { display: flex; align-items: center; gap: 4px; height: 32px; white-space: nowrap; }
.g-select .small { gap: 5px; }
.small .caret { margin-left: 2px; }
.s-open .small { height: 36px; }

/* Navigation bar */
.navbar { display: flex; flex: none; padding: 8px 12px 10px 6px; }
.nav { display: flex; align-items: center; justify-content: center; height: 33px; }
.w-46 { width: 46px; }
.w-45 { width: 45px; }
.w-22 { width: 22px; }
.w-39 { width: 39px; }
.address {
  display: flex;
  align-items: center;
  flex: 1;
  height: 33px;
  margin-right: 12px;
  padding-left: 3px;
  border: 1px solid #d9d9d9;
}
.crumbs { display: flex; flex: 1; gap: 2px; }
.crumbs li { display: flex; align-items: center; white-space: nowrap; }
.chev { width: 8px; height: 12px; margin: 0 12px 0 10px; }
.addr-btn { display: flex; align-items: center; justify-content: center; width: 24px; height: 31px; }
.refresh { width: 26px; border-left: 1px solid #d9d9d9; }
.search {
  display: flex;
  align-items: center;
  width: 304px;
  height: 33px;
  padding: 0 11px 0 9px;
  border: 1px solid #d9d9d9;
}
.search input {
  flex: 1;
  min-width: 0;
  border: 0;
  padding: 0;
  outline: 0;
  background: none;
  font: inherit;
  font-size: 19px;
}
.search input::placeholder { color: #6d6d6d; opacity: 1; }

/* Folder tree */
.main { display: flex; flex: 1; min-height: 0; }
.tree {
  flex: none;
  width: 434px;
  padding: 24px 2px 0 0;
  border-right: 1px solid #f0f0f0;
  overflow: hidden;
}
.tree ul { margin-bottom: 12px; }
.tree a { display: flex; align-items: center; gap: 6px; height: 36px; padding: 0 4px 0 49px; }
.tree .lvl1 { padding-left: 37px; }
.tree .current { background: #d9d9d9; }
.pin { width: 16px; height: 16px; margin-left: auto; fill: #8d979f; }

/* File list */
.list { flex: 1; min-width: 0; overflow: hidden; padding: 0 55px 0 24px; }
.files { width: 100%; table-layout: fixed; border-collapse: separate; border-spacing: 0; color: #6d6d6d; }
.c-date { width: 243px; }
.c-type { width: 203px; }
.c-size { width: 129px; }
.c-end { width: 6px; }
.files th { height: 49px; padding: 0; vertical-align: top; font-weight: 400; }
.files th button {
  position: relative;
  display: block;
  width: 100%;
  height: 40px;
  padding-left: 9px;
  border-right: 1px solid #e5e5e5;
  color: #4c607a;
  text-align: left;
}
.files th:first-child button { padding-left: 5px; }
.sort { position: absolute; top: 2px; left: calc(50% - 8px); width: 12px; height: 6px; }
.files td {
  height: 32px;
  padding: 0 0 0 9px;
  border: solid transparent;
  border-width: 1px 0;
  white-space: nowrap;
  overflow: hidden;
}
.files td:nth-child(2), .files td:nth-child(4) { font-size: 19px; }
.files td:first-child { padding-left: 6px; border-left-width: 1px; color: #000; }
.files td:nth-child(4) { padding: 0 5px 0 0; border-right-width: 1px; text-align: right; }
.files td .ico { display: inline-block; vertical-align: -4px; margin-right: 7px; }
.files .selected td { background: #cce8ff; border-color: #99d1ff; }

.scroll {
  display: flex;
  flex-direction: column;
  flex: none;
  width: 25px;
  background: #f0f0f0;
}
.scroll button { display: flex; align-items: center; justify-content: center; height: 26px; }
.track { flex: 1; }
.thumb { height: 52%; background: #cdcdcd; }

/* Status bar */
.status {
  display: flex;
  align-items: center;
  flex: none;
  height: 36px;
  padding: 0 8px 0 22px;
  color: #1e395b;
}
.sbar { width: 1px; height: 16px; margin: 0 17px; background: #e8e8e8; }
.size { margin-left: 10px; }
.views { display: flex; align-self: stretch; margin-left: auto; }
.view { display: flex; align-items: center; justify-content: center; width: 33px; height: 35px; }
.view.on { border: 1px solid #26a0da; background: #cbe8f6; }
```
